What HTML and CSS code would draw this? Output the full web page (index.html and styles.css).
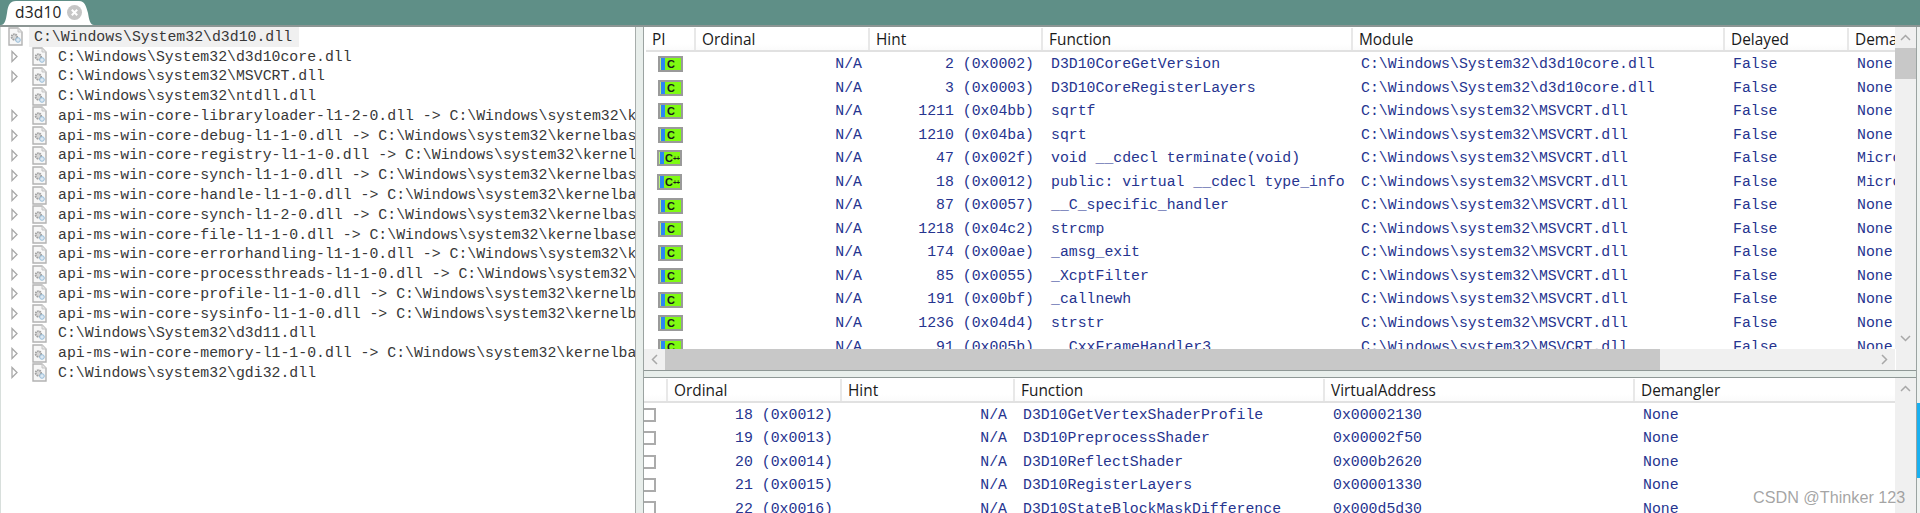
FILE: index.html
```
<!DOCTYPE html>
<html lang="en">
<head>
<meta charset="utf-8">
<title>d3d10</title>
<link rel="stylesheet" href="styles.css">
</head>
<body>
<svg class="defs" width="0" height="0" aria-hidden="true">
  <defs>
    <symbol id="dll" viewBox="0 0 15 19">
      <path d="M1 1H10L14 5V18H1Z" fill="#f7f7f7" stroke="#b2b2b2" stroke-width="1.4"/>
      <path d="M10 1V5H14" fill="#e6e6e6" stroke="#c4c4c4"/>
      <circle cx="6.4" cy="10" r="2.8" fill="#d8d8d8" stroke="#a0a0a0" stroke-width="1.8" stroke-dasharray="1.6 .7"/>
      <circle cx="10" cy="13" r="2.3" fill="#dce8f2" stroke="#96bcd8" stroke-width="1"/>
    </symbol>
    <symbol id="tri" viewBox="0 0 7 13">
      <path d="M1 1.5L6 6.5L1 11.5Z" fill="#fff" stroke="#a8a8a8" stroke-width="1.3"/>
    </symbol>
    <symbol id="up" viewBox="0 0 11 7"><path d="M1 6L5.5 1.5L10 6" fill="none" stroke="#a8a8a8" stroke-width="1.5"/></symbol>
    <symbol id="down" viewBox="0 0 11 7"><path d="M1 1L5.5 5.5L10 1" fill="none" stroke="#a8a8a8" stroke-width="1.5"/></symbol>
    <symbol id="left" viewBox="0 0 7 11"><path d="M6 1L1.5 5.5L6 10" fill="none" stroke="#a8a8a8" stroke-width="1.5"/></symbol>
    <symbol id="right" viewBox="0 0 7 11"><path d="M1 1L5.5 5.5L1 10" fill="none" stroke="#a8a8a8" stroke-width="1.5"/></symbol>
  </defs>
</svg>
<div class="app">
  <div class="tabbar">
    <div class="tab">
      <span class="tab-label">d3d10</span>
      <svg class="tab-close" width="15" height="15" viewBox="0 0 15 15"><circle cx="7.5" cy="7.5" r="7.5" fill="#c6c6c6"/><path d="M4.8 4.8L10.2 10.2M10.2 4.8L4.8 10.2" stroke="#fff" stroke-width="2"/></svg>
    </div>
  </div>
  <div class="main">
    <div class="tree">
      <div class="node root"><svg class="file"><use href="#dll"/></svg><span class="label sel">C:\Windows\System32\d3d10.dll</span></div>
      <div class="node"><svg class="exp"><use href="#tri"/></svg><svg class="file"><use href="#dll"/></svg><span class="label">C:\Windows\System32\d3d10core.dll</span></div>
      <div class="node"><svg class="exp"><use href="#tri"/></svg><svg class="file"><use href="#dll"/></svg><span class="label">C:\Windows\system32\MSVCRT.dll</span></div>
      <div class="node leaf"><svg class="file"><use href="#dll"/></svg><span class="label">C:\Windows\system32\ntdll.dll</span></div>
      <div class="node"><svg class="exp"><use href="#tri"/></svg><svg class="file"><use href="#dll"/></svg><span class="label">api-ms-win-core-libraryloader-l1-2-0.dll -&gt; C:\Windows\system32\kernelbase.dll</span></div>
      <div class="node"><svg class="exp"><use href="#tri"/></svg><svg class="file"><use href="#dll"/></svg><span class="label">api-ms-win-core-debug-l1-1-0.dll -&gt; C:\Windows\system32\kernelbase.dll</span></div>
      <div class="node"><svg class="exp"><use href="#tri"/></svg><svg class="file"><use href="#dll"/></svg><span class="label">api-ms-win-core-registry-l1-1-0.dll -&gt; C:\Windows\system32\kernelbase.dll</span></div>
      <div class="node"><svg class="exp"><use href="#tri"/></svg><svg class="file"><use href="#dll"/></svg><span class="label">api-ms-win-core-synch-l1-1-0.dll -&gt; C:\Windows\system32\kernelbase.dll</span></div>
      <div class="node"><svg class="exp"><use href="#tri"/></svg><svg class="file"><use href="#dll"/></svg><span class="label">api-ms-win-core-handle-l1-1-0.dll -&gt; C:\Windows\system32\kernelbase.dll</span></div>
      <div class="node"><svg class="exp"><use href="#tri"/></svg><svg class="file"><use href="#dll"/></svg><span class="label">api-ms-win-core-synch-l1-2-0.dll -&gt; C:\Windows\system32\kernelbase.dll</span></div>
      <div class="node"><svg class="exp"><use href="#tri"/></svg><svg class="file"><use href="#dll"/></svg><span class="label">api-ms-win-core-file-l1-1-0.dll -&gt; C:\Windows\system32\kernelbase.dll</span></div>
      <div class="node"><svg class="exp"><use href="#tri"/></svg><svg class="file"><use href="#dll"/></svg><span class="label">api-ms-win-core-errorhandling-l1-1-0.dll -&gt; C:\Windows\system32\kernelbase.dll</span></div>
      <div class="node"><svg class="exp"><use href="#tri"/></svg><svg class="file"><use href="#dll"/></svg><span class="label">api-ms-win-core-processthreads-l1-1-0.dll -&gt; C:\Windows\system32\kernelbase.dll</span></div>
      <div class="node"><svg class="exp"><use href="#tri"/></svg><svg class="file"><use href="#dll"/></svg><span class="label">api-ms-win-core-profile-l1-1-0.dll -&gt; C:\Windows\system32\kernelbase.dll</span></div>
      <div class="node"><svg class="exp"><use href="#tri"/></svg><svg class="file"><use href="#dll"/></svg><span class="label">api-ms-win-core-sysinfo-l1-1-0.dll -&gt; C:\Windows\system32\kernelbase.dll</span></div>
      <div class="node"><svg class="exp"><use href="#tri"/></svg><svg class="file"><use href="#dll"/></svg><span class="label">C:\Windows\System32\d3d11.dll</span></div>
      <div class="node"><svg class="exp"><use href="#tri"/></svg><svg class="file"><use href="#dll"/></svg><span class="label">api-ms-win-core-memory-l1-1-0.dll -&gt; C:\Windows\system32\kernelbase.dll</span></div>
      <div class="node"><svg class="exp"><use href="#tri"/></svg><svg class="file"><use href="#dll"/></svg><span class="label">C:\Windows\system32\gdi32.dll</span></div>
    </div>
    <div class="vsplit"></div>
    <div class="right">
      <div class="body top">
        <div class="tbl t1">
          <div class="head"><div>PI</div><div>Ordinal</div><div>Hint</div><div>Function</div><div>Module</div><div>Delayed</div><div>Demangler</div></div>
          <div class="row"><div class="pi"><span class="ico">C</span></div><div class="num">N/A</div><div class="num">2 (0x0002)</div><div>D3D10CoreGetVersion</div><div>C:\Windows\System32\d3d10core.dll</div><div>False</div><div>None</div></div>
          <div class="row"><div class="pi"><span class="ico">C</span></div><div class="num">N/A</div><div class="num">3 (0x0003)</div><div>D3D10CoreRegisterLayers</div><div>C:\Windows\System32\d3d10core.dll</div><div>False</div><div>None</div></div>
          <div class="row"><div class="pi"><span class="ico">C</span></div><div class="num">N/A</div><div class="num">1211 (0x04bb)</div><div>sqrtf</div><div>C:\Windows\system32\MSVCRT.dll</div><div>False</div><div>None</div></div>
          <div class="row"><div class="pi"><span class="ico">C</span></div><div class="num">N/A</div><div class="num">1210 (0x04ba)</div><div>sqrt</div><div>C:\Windows\system32\MSVCRT.dll</div><div>False</div><div>None</div></div>
          <div class="row"><div class="pi cpp"><span class="ico">C<span class="plus">++</span></span></div><div class="num">N/A</div><div class="num">47 (0x002f)</div><div>void __cdecl terminate(void)</div><div>C:\Windows\system32\MSVCRT.dll</div><div>False</div><div>Microsoft</div></div>
          <div class="row"><div class="pi cpp"><span class="ico">C<span class="plus">++</span></span></div><div class="num">N/A</div><div class="num">18 (0x0012)</div><div>public: virtual __cdecl type_info</div><div>C:\Windows\system32\MSVCRT.dll</div><div>False</div><div>Microsoft</div></div>
          <div class="row"><div class="pi"><span class="ico">C</span></div><div class="num">N/A</div><div class="num">87 (0x0057)</div><div>__C_specific_handler</div><div>C:\Windows\system32\MSVCRT.dll</div><div>False</div><div>None</div></div>
          <div class="row"><div class="pi"><span class="ico">C</span></div><div class="num">N/A</div><div class="num">1218 (0x04c2)</div><div>strcmp</div><div>C:\Windows\system32\MSVCRT.dll</div><div>False</div><div>None</div></div>
          <div class="row"><div class="pi"><span class="ico">C</span></div><div class="num">N/A</div><div class="num">174 (0x00ae)</div><div>_amsg_exit</div><div>C:\Windows\system32\MSVCRT.dll</div><div>False</div><div>None</div></div>
          <div class="row"><div class="pi"><span class="ico">C</span></div><div class="num">N/A</div><div class="num">85 (0x0055)</div><div>_XcptFilter</div><div>C:\Windows\system32\MSVCRT.dll</div><div>False</div><div>None</div></div>
          <div class="row"><div class="pi"><span class="ico">C</span></div><div class="num">N/A</div><div class="num">191 (0x00bf)</div><div>_callnewh</div><div>C:\Windows\system32\MSVCRT.dll</div><div>False</div><div>None</div></div>
          <div class="row"><div class="pi"><span class="ico">C</span></div><div class="num">N/A</div><div class="num">1236 (0x04d4)</div><div>strstr</div><div>C:\Windows\system32\MSVCRT.dll</div><div>False</div><div>None</div></div>
          <div class="row"><div class="pi"><span class="ico">C</span></div><div class="num">N/A</div><div class="num">91 (0x005b)</div><div>__CxxFrameHandler3</div><div>C:\Windows\system32\MSVCRT.dll</div><div>False</div><div>None</div></div>
        </div>
        <div class="vbar">
          <svg class="arr-v"><use href="#up"/></svg>
          <div class="vthumb"></div>
          <div class="fill"></div>
          <svg class="arr-v"><use href="#down"/></svg>
        </div>
      </div>
      <div class="hbar">
        <div class="hbtn"><svg class="arr-h"><use href="#left"/></svg></div>
        <div class="hthumb"></div>
        <div class="fill"></div>
        <div class="hbtn"><svg class="arr-h"><use href="#right"/></svg></div>
        <div class="corner"></div>
      </div>
      <div class="hsplit"></div>
      <div class="body bottom">
        <div class="tbl t2">
          <div class="head"><div></div><div>Ordinal</div><div>Hint</div><div>Function</div><div>VirtualAddress</div><div>Demangler</div></div>
          <div class="row"><div class="chk"><span class="box"></span></div><div class="num">18 (0x0012)</div><div class="num">N/A</div><div>D3D10GetVertexShaderProfile</div><div>0x00002130</div><div>None</div></div>
          <div class="row"><div class="chk"><span class="box"></span></div><div class="num">19 (0x0013)</div><div class="num">N/A</div><div>D3D10PreprocessShader</div><div>0x00002f50</div><div>None</div></div>
          <div class="row"><div class="chk"><span class="box"></span></div><div class="num">20 (0x0014)</div><div class="num">N/A</div><div>D3D10ReflectShader</div><div>0x000b2620</div><div>None</div></div>
          <div class="row"><div class="chk"><span class="box"></span></div><div class="num">21 (0x0015)</div><div class="num">N/A</div><div>D3D10RegisterLayers</div><div>0x00001330</div><div>None</div></div>
          <div class="row"><div class="chk"><span class="box"></span></div><div class="num">22 (0x0016)</div><div class="num">N/A</div><div>D3D10StateBlockMaskDifference</div><div>0x000d5d30</div><div>None</div></div>
        </div>
        <div class="vbar">
          <svg class="arr-v"><use href="#up"/></svg>
          <div class="fill"></div>
        </div>
      </div>
    </div>
    <div class="edge"><div class="stripe"></div></div>
  </div>
  <div class="watermark">CSDN @Thinker 123</div>
</div>
</body>
</html>
```
FILE: styles.css
```
* { box-sizing: border-box; }
html, body { margin: 0; padding: 0; height: 100%; background: #fff; overflow: hidden; }
.defs { display: block; height: 0; }
.app { width: 1920px; height: 513px; display: flex; flex-direction: column; overflow: hidden; position: relative; }

/* tab strip */
.tabbar { height: 27px; flex: none; background: #5f8f87; border-bottom: 2px solid #8c9694; padding-left: 1px; }
.tab { width: 93px; height: 25px; background: #fff; display: flex; align-items: center; padding-left: 14px; gap: 5px;
  clip-path: path('M0 25 C4 25 5 19 6 13 C7 5 9 1 15 1 L78 1 C84 1 85 6 87 13 C88 19 89 25 93 25 Z'); }
.tab-label { font: 15.5px/25px "Open Sans", sans-serif; color: #222; letter-spacing: .2px; }
.tab-close { flex: none; }

.main { flex: 1; display: flex; min-height: 0; }

/* left tree */
.tree { width: 635px; flex: none; overflow: hidden; border-left: 1px solid #d8dfdc; padding-top: 0; background: #fff; }
.node { height: 19.77px; display: flex; align-items: center; padding-left: 10px; white-space: pre;
  font: 14.83px/21px "Liberation Mono", monospace; color: #383838; }
.root { padding-left: 7px; }
.leaf { padding-left: 31px; }
.exp { width: 7px; height: 13px; flex: none; margin-right: 14px; }
.file { width: 15px; height: 19px; flex: none; margin-right: 11px; }
.label { flex: none; padding-top: 1px; }
.sel { background: #f0f0f0; height: 19.77px; line-height: 19px; padding-right: 7px; margin-left: -5px; padding-left: 5px; }

/* splitters */
.vsplit { width: 8px; flex: none; background: #e8eeeb; border-left: 1px solid #a7adab; }
.hsplit { height: 8px; flex: none; background: #e8eeeb; border-top: 1px solid #8f9896; border-bottom: 1px solid #8f9896; }

/* right side */
.right { width: 1274px; flex: none; display: flex; flex-direction: column; border-left: 1px solid #9ba3a1; border-right: 1px solid #9ba3a1; }
.body { display: flex; min-height: 0; }
.top { height: 322px; flex: none; }
.bottom { flex: 1; }

.tbl { flex: 1; min-width: 0; overflow: hidden; background: #fff; }
.t1 { padding-left: 2px; padding-top: 1px; }
.t2 { padding-top: 1px; }
.t1 .head, .t1 .row { display: grid; grid-template-columns: 50px 174px 173px 310px 372px 124px 46px; }
.t2 .head, .t2 .row { display: grid; grid-template-columns: 24px 174px 173px 310px 310px 260px; }

.head { height: 24px; border-bottom: 2px solid #e1e1e1; background: linear-gradient(#fff 70%, #fbfbfb); }
.head > div { font: 15.4px/23.5px "Open Sans", sans-serif; color: #1a1a1a; padding-left: 6px; border-right: 2px solid #e8e8e8; white-space: nowrap; overflow: hidden; }
.head > div:last-child { border-right: 0; }

.row { height: 23.56px; font: 14.83px/23.56px "Liberation Mono", monospace; color: #26348f; }
.t2 .row { height: 23.45px; line-height: 23.45px; }
.row > div { padding-left: 8px; padding-top: 1px; white-space: pre; overflow: hidden; }
.row > .num { text-align: right; padding-left: 0; padding-right: 8px; }
.t1 .row > .num:nth-child(3) { padding-right: 9px; }
.t2 .row > .num:nth-child(2) { padding-right: 9px; }

.row > .pi { padding-left: 12px; padding-top: 1px; display: flex; align-items: center; }
.row > .pi.cpp { padding-left: 11px; }
.ico { width: 25px; height: 16px; border: 2px solid #9a9a9a; background: linear-gradient(90deg, #b8f07a 0, #b8f07a 1px, #2c86f2 1px, #2c86f2 5px, #7ffb12 5px); display: block;
  font: bold 11px/12px "Liberation Sans", sans-serif; color: #1a1a1a; padding-left: 7px; overflow: hidden; white-space: nowrap; }
.cpp .ico { padding-left: 6px; }
.plus { font-size: 6.5px; letter-spacing: -.5px; vertical-align: 1px; }

.row > .chk { padding-left: 0; padding-top: 0; display: flex; align-items: center; }
.box { display: block; width: 12px; height: 14px; border: 2px solid #ababab; border-left: 0; background: #fff; }

/* scrollbars */
.vbar { width: 21px; flex: none; background: #f0f0f0; display: flex; flex-direction: column; }
.arr-v { width: 11px; height: 7px; flex: none; margin: 7px 5px 7px; }
.vthumb { height: 31px; flex: none; background: #c8c8c8; }
.fill { flex: 1; }
.hbar { height: 21px; flex: none; display: flex; background: #f0f0f0; }
.hbtn { width: 21px; flex: none; display: flex; align-items: center; justify-content: center; }
.arr-h { width: 7px; height: 11px; }
.hthumb { width: 995px; flex: none; background: #c8c8c8; }
.corner { width: 21px; flex: none; background: #f0f0f0; border-left: 1px solid #fff; }

.edge { flex: 1; background: #eef2f0; }
.stripe { width: 3px; height: 75px; margin-top: 376px; background: #1ab0f0; }

.watermark { position: absolute; left: 1753px; top: 487px; font: 16.2px/20px "Liberation Sans", sans-serif; color: rgba(125,125,125,.7); white-space: nowrap; }
```
